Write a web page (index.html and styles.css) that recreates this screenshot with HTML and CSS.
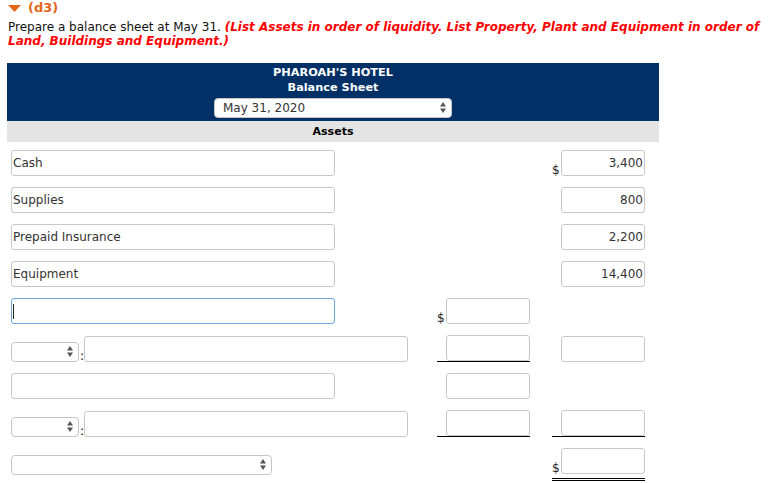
FILE: index.html
```html
<!DOCTYPE html>
<html>
<head>
<meta charset="utf-8">
<link rel="stylesheet" href="styles.css">
</head>
<body>
<div class="part">
  <svg class="part-caret" width="13" height="7" viewBox="0 0 13 7"><polygon points="0,0 13,0 6.5,7" fill="#e5661b"/></svg>
  <span class="part-id">(d3)</span>
</div>
<p class="prompt">Prepare a balance sheet at May 31. <em class="note">(List Assets in order of liquidity. List Property, Plant and Equipment in order of<br>Land, Buildings and Equipment.)</em></p>

<div class="sheet">
  <div class="sheet-head">
    <div class="title">PHAROAH'S HOTEL</div>
    <div class="title">Balance Sheet</div>
    <span class="select date-select">
      <select><option>May 31, 2020</option></select>
      <svg class="updown" width="6" height="11" viewBox="0 0 6 11"><polygon points="0,4.5 3,0 6,4.5" fill="#555"/><polygon points="0,6.5 6,6.5 3,11" fill="#555"/></svg>
    </span>
  </div>
  <div class="band">Assets</div>

  <div class="row first">
    <div class="c-label"><input class="txt" value="Cash"></div>
    <div class="c-mid"></div>
    <div class="c-gap"></div>
    <div class="c-right"><span class="dollar">$</span><input class="amt" value="3,400"></div>
  </div>

  <div class="row">
    <div class="c-label"><input class="txt" value="Supplies"></div>
    <div class="c-mid"></div>
    <div class="c-gap"></div>
    <div class="c-right"><span class="dollar"></span><input class="amt" value="800"></div>
  </div>

  <div class="row">
    <div class="c-label"><input class="txt" value="Prepaid Insurance"></div>
    <div class="c-mid"></div>
    <div class="c-gap"></div>
    <div class="c-right"><span class="dollar"></span><input class="amt" value="2,200"></div>
  </div>

  <div class="row">
    <div class="c-label"><input class="txt" value="Equipment"></div>
    <div class="c-mid"></div>
    <div class="c-gap"></div>
    <div class="c-right"><span class="dollar"></span><input class="amt" value="14,400"></div>
  </div>

  <div class="row">
    <div class="c-label"><span class="focus-wrap"><input class="txt focused" value=""></span></div>
    <div class="c-mid"><span class="dollar">$</span><input class="amt" value=""></div>
    <div class="c-gap"></div>
    <div class="c-right"></div>
  </div>

  <div class="row">
    <div class="c-label">
      <span class="select small-select">
        <select><option></option></select>
        <svg class="updown" width="6" height="11" viewBox="0 0 6 11"><polygon points="0,4.5 3,0 6,4.5" fill="#555"/><polygon points="0,6.5 6,6.5 3,11" fill="#555"/></svg>
      </span><span class="colon">:</span><input class="txt" value="">
    </div>
    <div class="c-mid underline"><span class="dollar"></span><input class="amt" value=""></div>
    <div class="c-gap"></div>
    <div class="c-right"><span class="dollar"></span><input class="amt" value=""></div>
  </div>

  <div class="row">
    <div class="c-label"><input class="txt" value=""></div>
    <div class="c-mid"><span class="dollar"></span><input class="amt" value=""></div>
    <div class="c-gap"></div>
    <div class="c-right"></div>
  </div>

  <div class="row">
    <div class="c-label">
      <span class="select small-select">
        <select><option></option></select>
        <svg class="updown" width="6" height="11" viewBox="0 0 6 11"><polygon points="0,4.5 3,0 6,4.5" fill="#555"/><polygon points="0,6.5 6,6.5 3,11" fill="#555"/></svg>
      </span><span class="colon">:</span><input class="txt" value="">
    </div>
    <div class="c-mid underline"><span class="dollar"></span><input class="amt" value=""></div>
    <div class="c-gap"></div>
    <div class="c-right underline"><span class="dollar"></span><input class="amt" value=""></div>
  </div>

  <div class="row total">
    <div class="c-label">
      <span class="select wide-select">
        <select><option></option></select>
        <svg class="updown" width="6" height="11" viewBox="0 0 6 11"><polygon points="0,4.5 3,0 6,4.5" fill="#555"/><polygon points="0,6.5 6,6.5 3,11" fill="#555"/></svg>
      </span>
    </div>
    <div class="c-mid"></div>
    <div class="c-gap"></div>
    <div class="c-right double"><span class="dollar">$</span><input class="amt" value=""></div>
  </div>
</div>
</body>
</html>
```

FILE: styles.css
```css
html, body {
  margin: 0;
  padding: 0;
  background: #fff;
}

body {
  font-family: "DejaVu Sans", Verdana, sans-serif;
  font-size: 12px;
  color: #111;
}

.part {
  display: flex;
  align-items: center;
  height: 15px;
  padding-left: 8px;
}

.part-caret {
  display: block;
  margin-top: 1px;
}

.part-id {
  margin-left: 7px;
  font-size: 13px;
  font-weight: bold;
  line-height: 15px;
  color: #e5661b;
}

.prompt {
  margin: 5px 0 0 0;
  padding-left: 8px;
  line-height: 14px;
  white-space: nowrap;
}

.note {
  font-weight: bold;
  font-style: italic;
  color: #f00;
}

.sheet {
  width: 652px;
  margin: 15px 0 0 7px;
}

.sheet-head {
  background: #003066;
  color: #fff;
  text-align: center;
  padding: 2px 0 3px 0;
}

.title {
  font-size: 11.3px;
  font-weight: bold;
  line-height: 15px;
}

.select {
  position: relative;
  display: inline-block;
  vertical-align: bottom;
}

.select select {
  -webkit-appearance: none;
  appearance: none;
  box-sizing: border-box;
  width: 100%;
  height: 20px;
  margin: 0;
  padding: 0 0 0 8px;
  border: 1px solid #c6c6c6;
  border-radius: 4px;
  background: #fff;
  font-family: "DejaVu Sans", Verdana, sans-serif;
  font-size: 12px;
  color: #333;
  display: block;
}

.select .updown {
  position: absolute;
  right: 6px;
  top: 4px;
  pointer-events: none;
}

.date-select {
  display: block;
  width: 238px;
  margin: 3px auto 0 auto;
  text-align: left;
}

.small-select {
  width: 68px;
}

.wide-select {
  width: 261px;
}

.band {
  background: #e4e4e4;
  height: 21px;
  line-height: 21px;
  text-align: center;
  font-size: 11px;
  font-weight: bold;
  color: #000;
}

.row {
  display: grid;
  grid-template-columns: 430px 93px 22px 93px;
  align-items: end;
  padding-top: 11px;
}

.row.first {
  padding-top: 8px;
}

.c-label {
  display: flex;
  align-items: flex-end;
  padding-left: 4px;
}

.c-mid,
.c-right {
  display: flex;
  align-items: flex-end;
}

.underline {
  border-bottom: 1px solid #000;
}

.double {
  padding-bottom: 4px;
  border-bottom: 3px double #000;
}

.row.total .c-label {
  align-self: start;
  padding-top: 7px;
}

.dollar {
  display: inline-block;
  width: 9px;
  line-height: 12px;
  font-size: 12px;
  color: #222;
}

.colon {
  display: inline-block;
  width: 5px;
  padding-left: 1px;
  box-sizing: border-box;
  line-height: 12px;
  color: #000;
}

.txt,
.amt {
  box-sizing: border-box;
  height: 26px;
  margin: 0;
  padding: 0 1px;
  border: 1px solid #c8c8c8;
  border-radius: 3px;
  background: #fff;
  font-family: "DejaVu Sans", Verdana, sans-serif;
  font-size: 12px;
  color: #333;
  outline: none;
  display: block;
}

.txt {
  width: 324px;
}

.amt {
  width: 84px;
  text-align: right;
}

.focus-wrap {
  position: relative;
  display: block;
}

.txt.focused {
  border-color: #6aa5de;
}

.focus-wrap::after {
  content: "";
  position: absolute;
  left: 2px;
  top: 6px;
  width: 1px;
  height: 15px;
  background: #222;
}
```
